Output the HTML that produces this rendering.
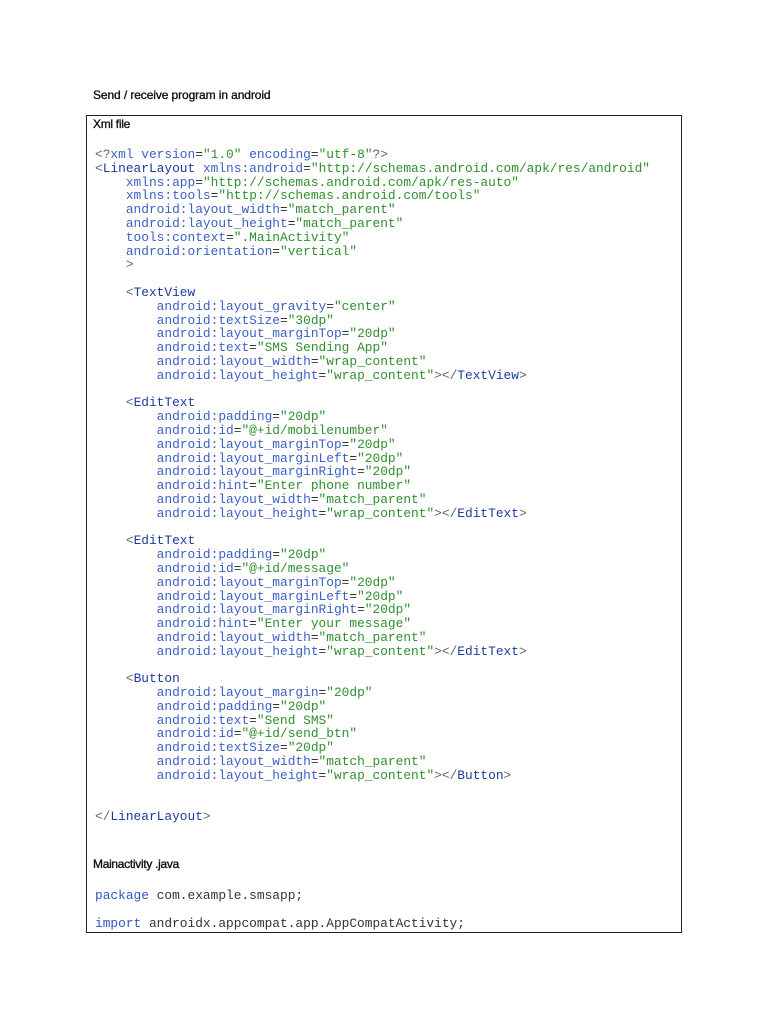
<!DOCTYPE html>
<html><head><meta charset="utf-8">
<style>
html,body{margin:0;padding:0;background:#fff;width:768px;height:1024px;overflow:hidden}
.title{position:absolute;left:93px;top:88px;font:12px "Liberation Sans",sans-serif;-webkit-text-stroke:0.35px #111;color:#111;letter-spacing:-0.1px}
.box{position:absolute;left:86px;top:115px;width:596px;height:818px;border:1px solid #222;box-sizing:border-box}
.h{position:absolute;left:93px;font:12px "Liberation Sans",sans-serif;-webkit-text-stroke:0.35px #111;color:#111;letter-spacing:-0.3px}
pre{position:absolute;left:95px;top:148px;margin:0;font:12.85px/13.8px "Liberation Mono",monospace;color:#333}
.t{color:#1d3a9e}.a{color:#3d5fc4}.v{color:#2f8f2f}.p{color:#666}.k{color:#2f57c0}
</style></head><body>
<div class="title">Send / receive program in android</div>
<div class="box"></div>
<div class="h" style="top:117px">Xml file</div>
<pre><span class="p">&lt;?</span><span class="a">xml version</span>=<span class="v">"1.0"</span> <span class="a">encoding</span>=<span class="v">"utf-8"</span><span class="p">?&gt;</span>
<span class="p">&lt;</span><span class="t">LinearLayout</span> <span class="a">xmlns:android</span>=<span class="v">"http://schemas.android.com/apk/res/android"</span>
    <span class="a">xmlns:app</span>=<span class="v">"http://schemas.android.com/apk/res-auto"</span>
    <span class="a">xmlns:tools</span>=<span class="v">"http://schemas.android.com/tools"</span>
    <span class="a">android:layout_width</span>=<span class="v">"match_parent"</span>
    <span class="a">android:layout_height</span>=<span class="v">"match_parent"</span>
    <span class="a">tools:context</span>=<span class="v">".MainActivity"</span>
    <span class="a">android:orientation</span>=<span class="v">"vertical"</span>
    <span class="p">&gt;</span>

    <span class="p">&lt;</span><span class="t">TextView</span>
        <span class="a">android:layout_gravity</span>=<span class="v">"center"</span>
        <span class="a">android:textSize</span>=<span class="v">"30dp"</span>
        <span class="a">android:layout_marginTop</span>=<span class="v">"20dp"</span>
        <span class="a">android:text</span>=<span class="v">"SMS Sending App"</span>
        <span class="a">android:layout_width</span>=<span class="v">"wrap_content"</span>
        <span class="a">android:layout_height</span>=<span class="v">"wrap_content"</span><span class="p">&gt;&lt;/</span><span class="t">TextView</span><span class="p">&gt;</span>

    <span class="p">&lt;</span><span class="t">EditText</span>
        <span class="a">android:padding</span>=<span class="v">"20dp"</span>
        <span class="a">android:id</span>=<span class="v">"@+id/mobilenumber"</span>
        <span class="a">android:layout_marginTop</span>=<span class="v">"20dp"</span>
        <span class="a">android:layout_marginLeft</span>=<span class="v">"20dp"</span>
        <span class="a">android:layout_marginRight</span>=<span class="v">"20dp"</span>
        <span class="a">android:hint</span>=<span class="v">"Enter phone number"</span>
        <span class="a">android:layout_width</span>=<span class="v">"match_parent"</span>
        <span class="a">android:layout_height</span>=<span class="v">"wrap_content"</span><span class="p">&gt;&lt;/</span><span class="t">EditText</span><span class="p">&gt;</span>

    <span class="p">&lt;</span><span class="t">EditText</span>
        <span class="a">android:padding</span>=<span class="v">"20dp"</span>
        <span class="a">android:id</span>=<span class="v">"@+id/message"</span>
        <span class="a">android:layout_marginTop</span>=<span class="v">"20dp"</span>
        <span class="a">android:layout_marginLeft</span>=<span class="v">"20dp"</span>
        <span class="a">android:layout_marginRight</span>=<span class="v">"20dp"</span>
        <span class="a">android:hint</span>=<span class="v">"Enter your message"</span>
        <span class="a">android:layout_width</span>=<span class="v">"match_parent"</span>
        <span class="a">android:layout_height</span>=<span class="v">"wrap_content"</span><span class="p">&gt;&lt;/</span><span class="t">EditText</span><span class="p">&gt;</span>

    <span class="p">&lt;</span><span class="t">Button</span>
        <span class="a">android:layout_margin</span>=<span class="v">"20dp"</span>
        <span class="a">android:padding</span>=<span class="v">"20dp"</span>
        <span class="a">android:text</span>=<span class="v">"Send SMS"</span>
        <span class="a">android:id</span>=<span class="v">"@+id/send_btn"</span>
        <span class="a">android:textSize</span>=<span class="v">"20dp"</span>
        <span class="a">android:layout_width</span>=<span class="v">"match_parent"</span>
        <span class="a">android:layout_height</span>=<span class="v">"wrap_content"</span><span class="p">&gt;&lt;/</span><span class="t">Button</span><span class="p">&gt;</span>


<span class="p">&lt;/</span><span class="t">LinearLayout</span><span class="p">&gt;</span></pre>
<div class="h" style="top:857px">Mainactivity .java</div>
<pre style="top:889px"><span class="k">package</span> com.example.smsapp;

<span class="k">import</span> androidx.appcompat.app.AppCompatActivity;</pre>
</body></html>
